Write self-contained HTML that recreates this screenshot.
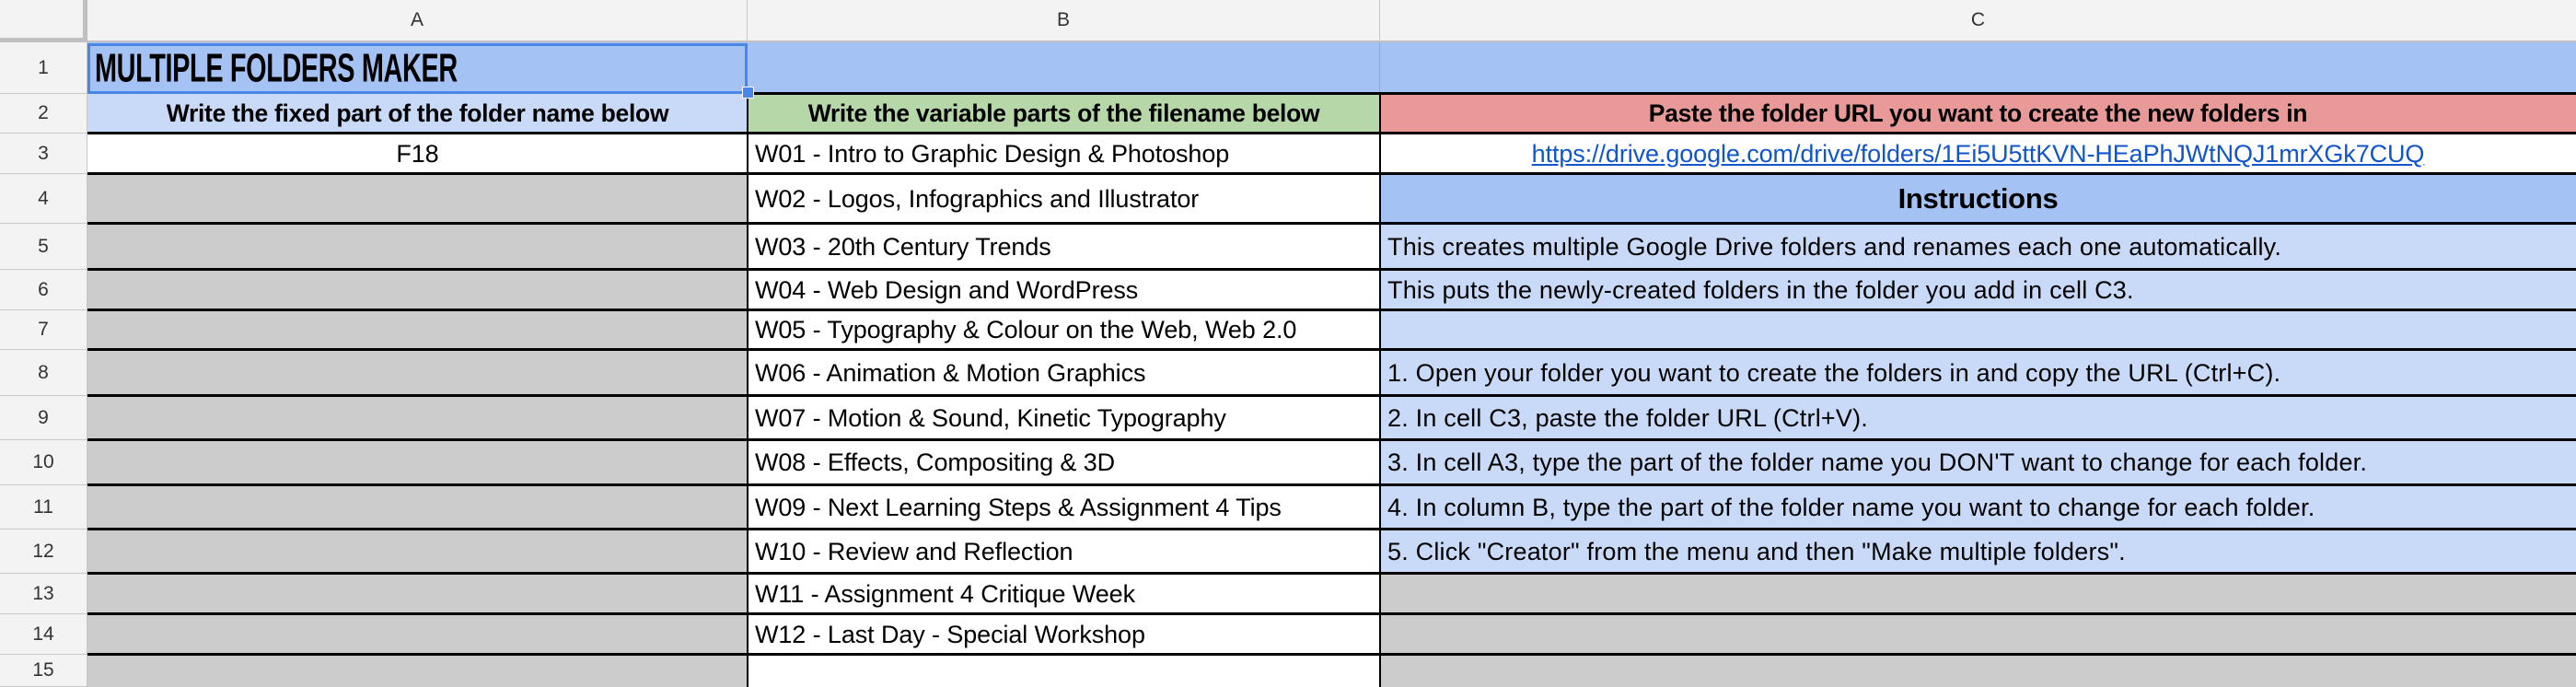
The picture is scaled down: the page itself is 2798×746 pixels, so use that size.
<!DOCTYPE html>
<html><head><meta charset="utf-8"><style>
body{margin:0;width:2798px;height:746px;overflow:hidden;background:#fff;font-family:"Liberation Sans",sans-serif;position:relative}
.c{position:absolute;box-sizing:border-box;display:flex;align-items:center;font-size:27px;color:#000;white-space:nowrap;overflow:hidden;padding-left:8px;letter-spacing:-0.1px}
.ctr{justify-content:center;padding-left:0}
.b{font-weight:bold;font-size:26.5px;letter-spacing:-0.3px}
.h{background:#f3f3f3;color:#333;font-size:21px;justify-content:center;padding:0;border-right:1px solid #c8c8c8;border-bottom:1px solid #c8c8c8;letter-spacing:0}
.hl{position:absolute;background:#000;height:3px}
.vl{position:absolute;background:#000;width:3px}
</style></head><body>
<div class="c h" style="left:0;top:0;width:95px;height:46px;border-bottom:5px solid #c0c0c0;border-right:5px solid #c0c0c0"></div>
<div class="c h" style="left:95px;top:0;width:717px;height:46px;border-bottom:2px solid #c0c0c0">A</div>
<div class="c h" style="left:812px;top:0;width:687px;height:46px;border-bottom:2px solid #c0c0c0">B</div>
<div class="c h" style="left:1499px;top:0;width:1299px;height:46px;border-bottom:2px solid #c0c0c0;border-right:none">C</div>
<div class="c h" style="left:0;top:46px;width:95px;height:56px">1</div>
<div class="c h" style="left:0;top:102px;width:95px;height:43px">2</div>
<div class="c h" style="left:0;top:145px;width:95px;height:44px">3</div>
<div class="c h" style="left:0;top:189px;width:95px;height:54px">4</div>
<div class="c h" style="left:0;top:243px;width:95px;height:50px">5</div>
<div class="c h" style="left:0;top:293px;width:95px;height:44px">6</div>
<div class="c h" style="left:0;top:337px;width:95px;height:43px">7</div>
<div class="c h" style="left:0;top:380px;width:95px;height:50px">8</div>
<div class="c h" style="left:0;top:430px;width:95px;height:48px">9</div>
<div class="c h" style="left:0;top:478px;width:95px;height:49px">10</div>
<div class="c h" style="left:0;top:527px;width:95px;height:48px">11</div>
<div class="c h" style="left:0;top:575px;width:95px;height:48px">12</div>
<div class="c h" style="left:0;top:623px;width:95px;height:44px">13</div>
<div class="c h" style="left:0;top:667px;width:95px;height:44px">14</div>
<div class="c h" style="left:0;top:711px;width:95px;height:35px">15</div>
<div class="c" style="left:95px;top:46px;width:2703px;height:56px;background:#a4c2f4"></div>
<div class="c" style="left:1498px;top:46px;width:1px;height:56px;background:#8fa9d6;padding:0"></div>
<div class="c" style="left:95px;top:48px;width:717px;height:54px;padding-left:8px;overflow:visible"><span style="display:inline-block;font-weight:bold;font-size:38px;letter-spacing:-0.5px;transform:scale(0.76,1.15);transform-origin:left center">MULTIPLE FOLDERS MAKER</span></div>
<div class="c ctr b" style="left:95px;top:102px;width:717px;height:43px;background:#c9daf8">Write the fixed part of the folder name below</div>
<div class="c ctr b" style="left:812px;top:102px;width:687px;height:43px;background:#b6d7a8">Write the variable parts of the filename below</div>
<div class="c ctr b" style="left:1499px;top:102px;width:1299px;height:43px;background:#ea9999">Paste the folder URL you want to create the new folders in</div>
<div class="c ctr" style="left:95px;top:145px;width:717px;height:44px">F18</div>
<div class="c" style="left:95px;top:189px;width:717px;height:557px;background:#cccccc"></div>
<div class="c" style="left:812px;top:145px;width:687px;height:44px">W01 - Intro to Graphic Design &amp; Photoshop</div>
<div class="c" style="left:812px;top:189px;width:687px;height:54px">W02 - Logos, Infographics and Illustrator</div>
<div class="c" style="left:812px;top:243px;width:687px;height:50px">W03 - 20th Century Trends</div>
<div class="c" style="left:812px;top:293px;width:687px;height:44px">W04 - Web Design and WordPress</div>
<div class="c" style="left:812px;top:337px;width:687px;height:43px">W05 - Typography &amp; Colour on the Web, Web 2.0</div>
<div class="c" style="left:812px;top:380px;width:687px;height:50px">W06 - Animation &amp; Motion Graphics</div>
<div class="c" style="left:812px;top:430px;width:687px;height:48px">W07 - Motion &amp; Sound, Kinetic Typography</div>
<div class="c" style="left:812px;top:478px;width:687px;height:49px">W08 - Effects, Compositing &amp; 3D</div>
<div class="c" style="left:812px;top:527px;width:687px;height:48px">W09 - Next Learning Steps &amp; Assignment 4 Tips</div>
<div class="c" style="left:812px;top:575px;width:687px;height:48px">W10 - Review and Reflection</div>
<div class="c" style="left:812px;top:623px;width:687px;height:44px">W11 - Assignment 4 Critique Week</div>
<div class="c" style="left:812px;top:667px;width:687px;height:44px">W12 - Last Day - Special Workshop</div>
<div class="c ctr" style="left:1499px;top:145px;width:1299px;height:44px;color:#1155cc;text-decoration:underline">https://drive.google.com/drive/folders/1Ei5U5ttKVN-HEaPhJWtNQJ1mrXGk7CUQ</div>
<div class="c ctr b" style="left:1499px;top:189px;width:1299px;height:54px;background:#a4c2f4;font-size:31px">Instructions</div>
<div class="c" style="left:1499px;top:243px;width:1299px;height:380px;background:#c9daf8"></div>
<div class="c" style="left:1499px;top:243px;width:1299px;height:50px;letter-spacing:0.2px">This creates multiple Google Drive folders and renames each one automatically.</div>
<div class="c" style="left:1499px;top:293px;width:1299px;height:44px;letter-spacing:0.2px">This puts the newly-created folders in the folder you add in cell C3.</div>
<div class="c" style="left:1499px;top:380px;width:1299px;height:50px;letter-spacing:0.2px">1. Open your folder you want to create the folders in and copy the URL (Ctrl+C).</div>
<div class="c" style="left:1499px;top:430px;width:1299px;height:48px;letter-spacing:0.2px">2. In cell C3, paste the folder URL (Ctrl+V).</div>
<div class="c" style="left:1499px;top:478px;width:1299px;height:49px;letter-spacing:0.2px">3. In cell A3, type the part of the folder name you DON'T want to change for each folder.</div>
<div class="c" style="left:1499px;top:527px;width:1299px;height:48px;letter-spacing:0.2px">4. In column B, type the part of the folder name you want to change for each folder.</div>
<div class="c" style="left:1499px;top:575px;width:1299px;height:48px;letter-spacing:0.2px">5. Click "Creator" from the menu and then "Make multiple folders".</div>
<div class="c" style="left:1499px;top:623px;width:1299px;height:123px;background:#cccccc"></div>
<div class="hl" style="left:812px;top:100px;width:1986px"></div>
<div class="hl" style="left:95px;top:143px;width:2703px"></div>
<div class="hl" style="left:95px;top:187px;width:2703px"></div>
<div class="hl" style="left:95px;top:241px;width:2703px"></div>
<div class="hl" style="left:95px;top:291px;width:2703px"></div>
<div class="hl" style="left:95px;top:335px;width:2703px"></div>
<div class="hl" style="left:95px;top:378px;width:2703px"></div>
<div class="hl" style="left:95px;top:428px;width:2703px"></div>
<div class="hl" style="left:95px;top:476px;width:2703px"></div>
<div class="hl" style="left:95px;top:525px;width:2703px"></div>
<div class="hl" style="left:95px;top:573px;width:2703px"></div>
<div class="hl" style="left:95px;top:621px;width:2703px"></div>
<div class="hl" style="left:95px;top:665px;width:2703px"></div>
<div class="hl" style="left:95px;top:709px;width:2703px"></div>
<div class="vl" style="left:811px;top:102px;height:644px;width:2px"></div>
<div class="vl" style="left:1498px;top:102px;height:644px;width:2px"></div>
<div style="position:absolute;left:95px;top:47px;width:717px;height:55px;box-sizing:border-box;border:3px solid #4a86e8"></div>
<div style="position:absolute;left:806px;top:94px;width:11px;height:11px;background:#4a86e8;border:1px solid #fff"></div>
</body></html>
